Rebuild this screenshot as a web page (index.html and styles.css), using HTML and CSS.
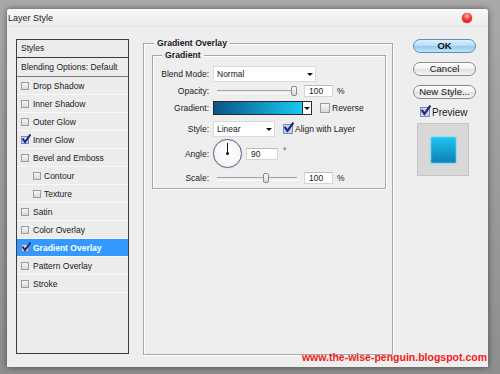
FILE: index.html
```html
<!DOCTYPE html>
<html lang="en">

<head>
    <meta charset="UTF-8">
    <meta name="viewport" content="width=device-width, initial-scale=1.0">
    <title>Layer Style</title>
    <link rel="stylesheet" href="styles.css">
</head>

<body>

    <div class="dialog">
        <div class="titlebar">
            <span class="title">Layer Style</span>
            <span class="close"></span>
        </div>

        <div class="content">
            <div class="styles-list">
                <div class="list-head">Styles</div>
                <div class="list-item plain">Blending Options: Default</div>
                <div class="list-item"><span class="check"></span>Drop Shadow</div>
                <div class="list-item"><span class="check"></span>Inner Shadow</div>
                <div class="list-item"><span class="check"></span>Outer Glow</div>
                <div class="list-item"><span class="check on"><svg viewBox="0 0 10 10" width="10" height="10"><path d="M1.5 4.5 L4 8 L9.5 0.5" fill="none" stroke="#1b2a7c" stroke-width="2"/></svg></span>Inner Glow</div>
                <div class="list-item"><span class="check"></span>Bevel and Emboss</div>
                <div class="list-item sub"><span class="check"></span>Contour</div>
                <div class="list-item sub"><span class="check"></span>Texture</div>
                <div class="list-item"><span class="check"></span>Satin</div>
                <div class="list-item"><span class="check"></span>Color Overlay</div>
                <div class="list-item selected"><span class="check on"><svg viewBox="0 0 10 10" width="10" height="10"><path d="M1.5 4.5 L4 8 L9.5 0.5" fill="none" stroke="#1b2a7c" stroke-width="2"/></svg></span>Gradient Overlay</div>
                <div class="list-item"><span class="check"></span>Pattern Overlay</div>
                <div class="list-item"><span class="check"></span>Stroke</div>
            </div>

            <fieldset class="group overlay">
                <legend>Gradient Overlay</legend>
                <fieldset class="group gradient">
                    <legend>Gradient</legend>

                    <div class="row row-blend">
                        <span class="label">Blend Mode:</span>
                        <div class="select wide"><span>Normal</span><span class="arrow"></span></div>
                    </div>

                    <div class="row row-opacity">
                        <span class="label">Opacity:</span>
                        <div class="slider"><span class="thumb" style="left: 78px"></span></div>
                        <span class="field">100</span>
                        <span class="unit">%</span>
                    </div>

                    <div class="row row-gradient">
                        <span class="label">Gradient:</span>
                        <span class="swatch"></span>
                        <span class="swatch-arrow"><span class="arrow"></span></span>
                        <span class="box"></span>
                        <span class="box-label">Reverse</span>
                    </div>

                    <div class="row row-style">
                        <span class="label">Style:</span>
                        <div class="select short"><span>Linear</span><span class="arrow"></span></div>
                        <span class="box on"><svg viewBox="0 0 10 10" width="11" height="11"><path d="M1.5 4.5 L4 8 L9.5 0.5" fill="none" stroke="#1b2a7c" stroke-width="2"/></svg></span>
                        <span class="box-label">Align with Layer</span>
                    </div>

                    <div class="row row-angle">
                        <span class="label">Angle:</span>
                        <span class="dial"></span>
                        <span class="field angle">90</span>
                        <span class="degree">°</span>
                    </div>

                    <div class="row row-scale">
                        <span class="label">Scale:</span>
                        <div class="slider"><span class="thumb" style="left: 50px"></span></div>
                        <span class="field">100</span>
                        <span class="unit">%</span>
                    </div>
                </fieldset>
            </fieldset>

            <div class="actions">
                <div class="btn primary">OK</div>
                <div class="btn">Cancel</div>
                <div class="btn">New Style...</div>
                <div class="preview-toggle">
                    <span class="box on"><svg viewBox="0 0 10 10" width="11" height="11"><path d="M1.5 4.5 L4 8 L9.5 0.5" fill="none" stroke="#1b2a7c" stroke-width="2"/></svg></span>
                    <span>Preview</span>
                </div>
                <div class="preview">
                    <span class="preview-swatch"></span>
                </div>
            </div>
        </div>

        <div class="watermark">www.the-wise-penguin.blogspot.com</div>
    </div>

</body>

</html>
```

FILE: styles.css
```css
* {
    box-sizing: border-box;
}

body {
    margin: 0;
    height: 374px;
    padding: 9px 0 0 7px;
    overflow: hidden;
    background: linear-gradient(#a9a9a9, #8e8e8e);
    font-family: "Liberation Sans", Arial, sans-serif;
    font-size: 8.5px;
    color: #1a1a1a;
}

.dialog {
    position: relative;
    width: 481px;
    height: 358px;
    background: #eeeeee;
    border-radius: 3px 3px 0 0;
    box-shadow: 0 0 6px rgba(0, 0, 0, 0.5);
}

.titlebar {
    display: flex;
    align-items: center;
    justify-content: space-between;
    height: 18px;
    padding: 0 16px 0 1px;
    background: linear-gradient(#f8f8f8, #ececec);
    border-bottom: 1px solid #e3e3e3;
    border-radius: 3px 3px 0 0;
}

.title {
    font-size: 9px;
    color: #2a2222;
}

.close {
    width: 10px;
    height: 10px;
    border-radius: 50%;
    background: radial-gradient(circle at 50% 30%, #ffc4c4 0, #ff3a3a 40%, #c30000 100%);
    box-shadow: 0 0 1px #7a0000;
}

.content {
    display: flex;
    align-items: flex-start;
    padding: 12px 12px 0 9px;
}

/* styles list */

.styles-list {
    flex: none;
    width: 113px;
    height: 315px;
    border: 1px solid #3d3d3d;
    background: #ececec;
}

.list-head {
    height: 18px;
    padding-left: 4px;
    line-height: 17px;
    border-bottom: 1px solid #3d3d3d;
}

.list-item {
    display: flex;
    align-items: center;
    gap: 4px;
    height: 18px;
    padding-left: 4px;
    border-bottom: 1px solid #f8f8f8;
}

.list-item.plain {
    height: 19px;
    border-bottom-color: #7a7a7a;
}

.list-item.sub {
    padding-left: 16px;
    gap: 3px;
}

.list-item.selected {
    background: #3399ff;
    color: #fff;
    font-weight: bold;
}

.check {
    flex: none;
    width: 8px;
    height: 8px;
    border: 1px solid #9c9c9c;
    background: linear-gradient(#f7f7f7, #d9d9d9);
}

.check.on,
.box.on {
    background: #c6d0f2;
    border-color: #7d8bbd;
}

.check svg {
    display: block;
    margin: -3px 0 0 -1px;
}

/* group boxes */

.group {
    margin: 0;
    min-width: 0;
    border: 1px solid #a6a6a6;
    box-shadow: inset 1px 1px 0 #fff, 1px 1px 0 #fff;
}

.group legend {
    padding: 0 3px;
    font-size: 8.7px;
    font-weight: bold;
    line-height: 10px;
    background: #eeeeee;
}

.overlay {
    flex: none;
    width: 250px;
    height: 317px;
    margin: -1px 0 0 14px;
    padding: 2px 6px 0 8px;
}

.overlay > legend {
    margin-left: 2px;
}

.gradient {
    padding: 6px 6px 3px 6px;
}

.gradient > legend {
    margin-left: 3px;
}

.row {
    display: flex;
    align-items: center;
    white-space: nowrap;
}

.label {
    flex: none;
    width: 50px;
    margin-right: 4px;
    text-align: right;
}

.row-blend {
    height: 16px;
}

.row-opacity {
    height: 14px;
    margin-top: 2px;
}

.row-gradient {
    height: 14px;
    margin-top: 3px;
}

.row-style {
    height: 16px;
    margin-top: 6px;
}

.row-angle {
    height: 29px;
    margin-top: 2px;
}

.row-scale {
    height: 14px;
    margin-top: 3px;
}

.select {
    display: flex;
    align-items: center;
    justify-content: space-between;
    height: 16px;
    padding: 0 2px 0 3px;
    background: #fff;
    border: 1px solid #dadada;
}

.select.wide {
    width: 103px;
}

.select.short {
    width: 62px;
}

.arrow {
    width: 0;
    height: 0;
    border-left: 3px solid transparent;
    border-right: 3px solid transparent;
    border-top: 3px solid #111;
}

.slider {
    position: relative;
    flex: none;
    width: 84px;
    height: 12px;
}

.slider::before {
    content: "";
    position: absolute;
    left: 4px;
    right: 0;
    top: 5px;
    height: 2px;
    border-top: 1px solid #a2a2a2;
    border-bottom: 1px solid #fff;
}

.thumb {
    position: absolute;
    top: 1px;
    width: 6px;
    height: 10px;
    border: 1px solid #8a8a8a;
    border-radius: 2px;
    background: linear-gradient(#ffffff, #d6d6d6);
}

.field {
    flex: none;
    width: 29px;
    height: 12px;
    margin-left: 7px;
    padding-left: 4px;
    line-height: 10px;
    background: #fff;
    border: 1px solid #d6d6d6;
    border-top-color: #bdbdbd;
}

.field.angle {
    width: 32px;
    margin-left: 4px;
}

.unit {
    margin-left: 4px;
}

.degree {
    align-self: flex-start;
    margin: 7px 0 0 5px;
}

.swatch {
    flex: none;
    width: 90px;
    height: 14px;
    border: 1px solid #2a2a2a;
    background: linear-gradient(to right, #0b5487, #17c9f3);
}

.swatch-arrow {
    display: flex;
    align-items: center;
    justify-content: center;
    flex: none;
    width: 9px;
    height: 14px;
    border: 1px solid #2a2a2a;
    border-left: none;
    background: #fff;
}

.box {
    flex: none;
    width: 10px;
    height: 10px;
    margin-left: 8px;
    border: 1px solid #9c9c9c;
    background: linear-gradient(#f7f7f7, #d9d9d9);
}

.box svg {
    display: block;
    margin: -3px 0 0 -1px;
}

.box-label {
    margin-left: 2px;
}

.dial {
    position: relative;
    flex: none;
    width: 29px;
    height: 29px;
    border: 1px solid #55657c;
    border-radius: 50%;
    background: radial-gradient(#ffffff, #f1f1f1);
    box-shadow: 0 0 1px #9aa8c0;
}

.dial::before {
    content: "";
    position: absolute;
    left: 13px;
    top: 3px;
    width: 1px;
    height: 11px;
    background: #111;
}

.dial::after {
    content: "";
    position: absolute;
    left: 12px;
    top: 12px;
    width: 3px;
    height: 3px;
    border-radius: 50%;
    background: #111;
}

/* buttons */

.actions {
    flex: none;
    display: flex;
    flex-direction: column;
    width: 63px;
    margin-left: 20px;
}

.btn {
    height: 14px;
    margin-top: 9px;
    border: 1px solid #8a8a8a;
    border-radius: 7px;
    background: linear-gradient(#ffffff, #f0f0f0 50%, #e0e0e0 51%, #f4f4f4);
    font-size: 9.5px;
    line-height: 12px;
    text-align: center;
    color: #111;
}

.btn.primary {
    margin-top: 0;
    border-color: #5f8fb5;
    background: linear-gradient(#dcf0fc, #b4dcf5 50%, #92c9ee 51%, #bfe4fa);
    font-weight: bold;
}

.preview-toggle {
    display: flex;
    align-items: center;
    height: 10px;
    margin-top: 8px;
    padding-left: 7px;
    font-size: 10px;
}

.preview-toggle .box {
    margin: 0 2px 0 0;
}

.preview {
    display: flex;
    align-items: center;
    justify-content: center;
    width: 52px;
    height: 53px;
    margin: 6px 0 0 4px;
    background: #d8d8d8;
    border: 1px solid #c4c4c4;
}

.preview-swatch {
    width: 25px;
    height: 26px;
    background: linear-gradient(#1fc6f1, #0a7fb4);
    box-shadow: inset 0 0 2px #6fe4ff, 0 0 2px #3ccfff;
}

.watermark {
    position: absolute;
    right: 1px;
    bottom: 4px;
    font-size: 10.5px;
    font-weight: bold;
    line-height: 12px;
    color: #f31a1a;
}
```
